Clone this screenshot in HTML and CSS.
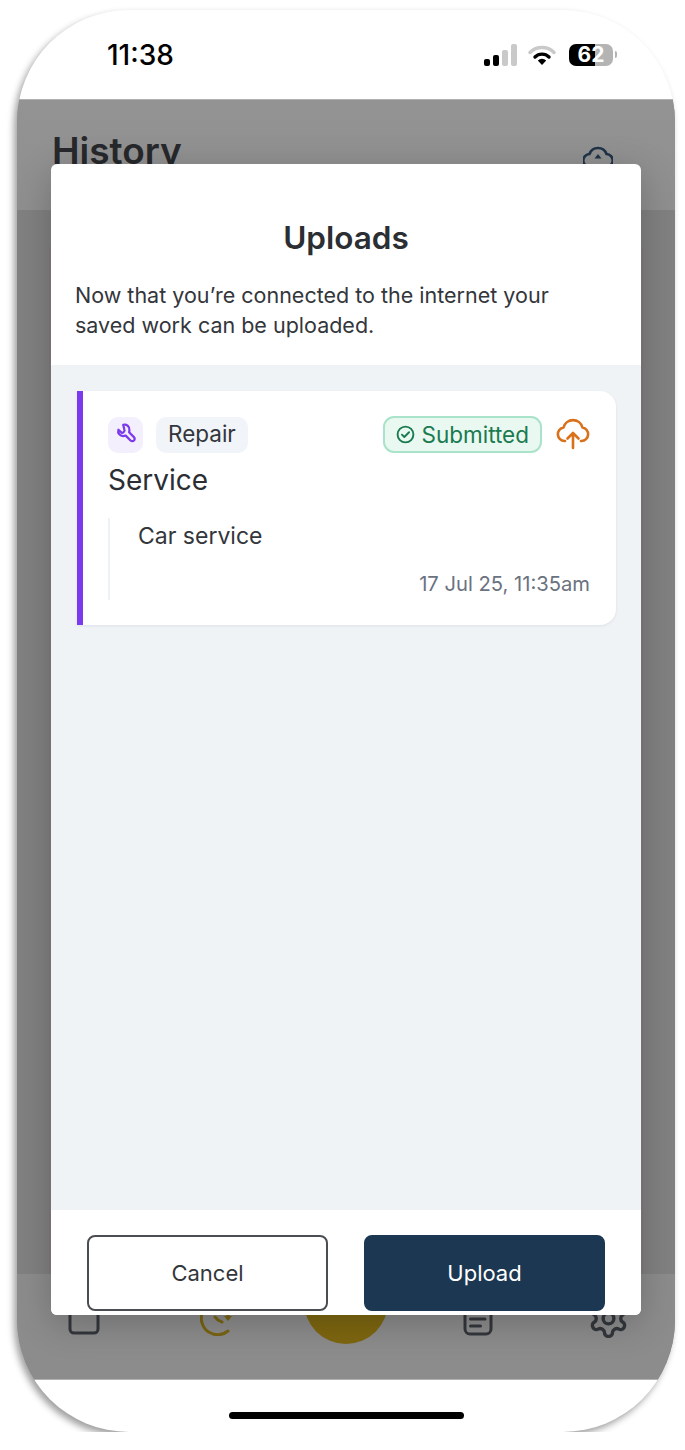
FILE: index.html
```html
<!DOCTYPE html>
<html lang="en">
<head>
    <meta charset="UTF-8">
    <meta name="viewport" content="width=device-width, initial-scale=1.0">
    <title>Uploads</title>
    <link rel="stylesheet" href="styles.css">
</head>
<body>

    <div class="phone">

        <!-- Status bar -->
        <div class="status-bar">
            <span class="clock">11:38</span>
            <div class="status-icons">
                <div class="signal">
                    <span class="bar bar-1"></span>
                    <span class="bar bar-2"></span>
                    <span class="bar bar-3 off"></span>
                    <span class="bar bar-4 off"></span>
                </div>
                <svg class="wifi" viewBox="0 0 28 22">
                    <path d="M2 8.5a17 17 0 0 1 24 0" fill="none" stroke="#c9c9c9" stroke-width="3.4" stroke-linecap="round"/>
                    <path d="M7 13a10 10 0 0 1 14 0" fill="none" stroke="#000" stroke-width="3.4" stroke-linecap="round"/>
                    <path d="M14 21l-4.200-4.600a6 6 0 0 1 8.400 0z" fill="#000"/>
                </svg>
                <div class="battery"><span>62</span></div>
                <span class="battery-nub"></span>
            </div>
        </div>

        <!-- Screen behind the dialog -->
        <div class="screen">
            <div class="screen-head">
                <h2 class="screen-title">History</h2>
                <svg class="head-cloud" viewBox="0 0 30 40" fill="none" stroke="#1f3347" stroke-width="2.600" stroke-linejoin="round">
                    <path d="M7 29a6.500 6.500 0 0 1-.5-13 9 9 0 0 1 17 0 6.500 6.500 0 0 1-.5 13z"/>
                    <path d="M15 16l-3.500 4.500h7z" fill="#1f3347" stroke="none"/>
                </svg>
            </div>
            <div class="screen-list"></div>
            <div class="bottom-nav">
                <svg class="nav-icon nav-home" viewBox="0 0 32 44" fill="none" stroke="#33373c" stroke-width="3">
                    <rect x="2" y="2" width="28" height="40" rx="4"/>
                </svg>
                <svg class="nav-icon nav-history" viewBox="0 0 36 36" fill="none" stroke="#7a6512" stroke-width="3" stroke-linecap="round">
                    <path d="M28 31A16.400 16.400 0 1 1 20 2"/>
                    <path d="M15 17l3 3 4 2"/>
                    <path d="M28 10v8"/>
                    <path d="M24 16h8l-4 5z" fill="#7a6512" stroke="none"/>
                </svg>
                <span class="nav-fab"></span>
                <svg class="nav-icon nav-doc" viewBox="0 0 30 48" fill="none" stroke="#33373c" stroke-width="3" stroke-linecap="round">
                    <rect x="2" y="2" width="26" height="44" rx="5"/>
                    <path d="M7.500 31h14.500M7.500 38h10"/>
                </svg>
                <svg class="nav-icon nav-gear" viewBox="0 0 24 24" fill="none" stroke="#33373c" stroke-width="1.900" stroke-linecap="round" stroke-linejoin="round">
                    <path d="M12.220 2h-.44a2 2 0 0 0-2 2v.18a2 2 0 0 1-1 1.730l-.43.25a2 2 0 0 1-2 0l-.15-.08a2 2 0 0 0-2.730.73l-.22.38a2 2 0 0 0 .73 2.730l.15.1a2 2 0 0 1 1 1.720v.51a2 2 0 0 1-1 1.740l-.15.09a2 2 0 0 0-.73 2.730l.22.38a2 2 0 0 0 2.730.73l.15-.08a2 2 0 0 1 2 0l.43.25a2 2 0 0 1 1 1.730V20a2 2 0 0 0 2 2h.44a2 2 0 0 0 2-2v-.18a2 2 0 0 1 1-1.730l.43-.25a2 2 0 0 1 2 0l.15.08a2 2 0 0 0 2.730-.73l.22-.39a2 2 0 0 0-.73-2.730l-.15-.08a2 2 0 0 1-1-1.740v-.5a2 2 0 0 1 1-1.740l.15-.09a2 2 0 0 0 .73-2.730l-.22-.38a2 2 0 0 0-2.730-.73l-.15.08a2 2 0 0 1-2 0l-.43-.25a2 2 0 0 1-1-1.730V4a2 2 0 0 0-2-2z"/>
                    <circle cx="12" cy="12" r="3"/>
                </svg>
            </div>
        </div>

        <!-- Home indicator -->
        <div class="home-area">
            <span class="home-bar"></span>
        </div>

        <!-- Uploads dialog -->
        <div class="dialog">
            <div class="dialog-head">
                <h1>Uploads</h1>
                <p>Now that you’re connected to the internet your saved work can be uploaded.</p>
            </div>

            <div class="dialog-body">
                <div class="upload-card">
                    <div class="card-top">
                        <span class="type-icon">
                            <svg viewBox="0 0 24 24" fill="none" stroke="#7c3aed" stroke-width="2" stroke-linecap="round" stroke-linejoin="round">
                                <path d="M10 3.500c3-.8 6 1.500 5.500 5l-.3 1.500 4.300 4.300c2 2-1 5-3 3l-4.300-4.300-1.500.3c-3.500.5-6-2.500-5-5.500l2.800 2.500c1 .8 3.300-1.500 2.500-2.500z"/>
                            </svg>
                        </span>
                        <span class="type-chip">Repair</span>
                        <span class="status-badge">
                            <svg viewBox="0 0 24 24" fill="none" stroke="#1a7a50" stroke-width="2.400" stroke-linecap="round" stroke-linejoin="round">
                                <circle cx="12" cy="12" r="10"/>
                                <path d="M7.500 12.200l3 3 6-6"/>
                            </svg>
                            Submitted
                        </span>
                        <svg class="upload-icon" viewBox="0 0 34 34" fill="none" stroke="#d9701a" stroke-width="2.600" stroke-linecap="round" stroke-linejoin="round">
                            <path d="M9 25H8.500A6.800 6.800 0 0 1 7.500 11.500 9.800 9.800 0 0 1 26.500 11.500 6.800 6.800 0 0 1 25.500 25H25"/>
                            <path d="M17 32V17M11.500 22.500 17 17l5.500 5.500"/>
                        </svg>
                    </div>
                    <h3 class="card-title">Service</h3>
                    <div class="card-note">
                        <p>Car service</p>
                        <time>17 Jul 25, 11:35am</time>
                    </div>
                </div>
            </div>

            <div class="dialog-foot">
                <button class="btn btn-cancel">Cancel</button>
                <button class="btn btn-upload">Upload</button>
            </div>
        </div>

    </div>

</body>
</html>
```

FILE: styles.css
```css
/* Page */
body {
    margin: 0;
    background-color: #fff;
    font-family: 'Inter', 'Liberation Sans', sans-serif;
    color: #2b2e33;
}

/* Phone frame */
.phone {
    position: relative;
    display: flex;
    flex-direction: column;
    width: 658px;
    height: 1422px;
    margin: 10px 0 0 17px;
    background: #fff;
    border-radius: 112px;
    overflow: hidden;
    box-shadow: -3px 4px 7px rgba(0, 0, 0, 0.38);
}

/* Status bar */
.status-bar {
    display: flex;
    justify-content: space-between;
    align-items: center;
    height: 89px;
    padding: 0 58px 0 90px;
    box-sizing: border-box;
    flex-shrink: 0;
}

.clock {
    font-size: 28px;
    font-weight: 500;
    color: #000;
}

.status-icons {
    display: flex;
    align-items: center;
}

.signal {
    display: flex;
    align-items: flex-end;
    gap: 3px;
    height: 22px;
    margin-right: 11px;
}

.bar {
    width: 6px;
    background: #000;
    border-radius: 2px;
}

.bar-1 { height: 7px; }
.bar-2 { height: 11px; }
.bar-3 { height: 16px; }
.bar-4 { height: 22px; }

.bar.off {
    background: #c9c9c9;
}

.wifi {
    width: 28px;
    height: 22px;
    margin-right: 13px;
}

.battery {
    width: 44px;
    height: 22px;
    border-radius: 7px;
    background: linear-gradient(90deg, #000 58%, #b4b4b4 58%);
    color: #fff;
    font-size: 21px;
    font-weight: 700;
    line-height: 22px;
    text-align: center;
}

.battery-nub {
    width: 2px;
    height: 7px;
    margin-left: 2px;
    background: #b4b4b4;
    border-radius: 0 2px 2px 0;
}

/* Dimmed screen behind the dialog */
.screen {
    display: flex;
    flex-direction: column;
    flex: 1;
    background: #818181;
    border-top: 1px solid #b0b0b0;
    border-bottom: 1px solid #b0b0b0;
}

.screen-head {
    display: flex;
    justify-content: space-between;
    height: 110px;
    padding: 28px 62px 0 35px;
    box-sizing: border-box;
    background: linear-gradient(180deg, #939393, #8f8f8f);
}

.screen-title {
    margin: 0;
    font-size: 37px;
    font-weight: 600;
    color: #26282b;
}

.head-cloud {
    width: 30px;
    height: 40px;
    margin-top: 10px;
}

.screen-list {
    flex: 1;
    margin: 36px 32px 0;
    border-left: 1px solid #85787f;
    border-right: 1px solid #85787f;
}

.bottom-nav {
    display: flex;
    align-items: flex-end;
    height: 105px;
    padding: 0 0 42px 51px;
    box-sizing: border-box;
    background: #8c8c8c;
}

.nav-icon {
    flex-shrink: 0;
}

.nav-home {
    width: 32px;
    height: 44px;
    margin-bottom: 2px;
}

.nav-history {
    width: 36px;
    height: 36px;
    margin-left: 100px;
    margin-bottom: 1px;
}

.nav-fab {
    width: 84px;
    height: 84px;
    margin-left: 68px;
    margin-bottom: -7px;
    border-radius: 50%;
    background: #7e6710;
}

.nav-doc {
    width: 30px;
    height: 48px;
    margin-left: 75px;
    margin-bottom: 1px;
}

.nav-gear {
    width: 43px;
    height: 43px;
    margin-left: 94px;
    margin-bottom: -3px;
}

/* Home indicator */
.home-area {
    display: flex;
    justify-content: center;
    height: 52px;
    flex-shrink: 0;
}

.home-bar {
    width: 235px;
    height: 7px;
    margin-top: 32px;
    background: #000;
    border-radius: 4px;
}

/* Uploads dialog */
.dialog {
    position: absolute;
    top: 154px;
    left: 34px;
    display: flex;
    flex-direction: column;
    width: 590px;
    height: 1151px;
    background: #fff;
    border-radius: 6px;
    overflow: hidden;
    box-shadow: 0 8px 36px rgba(0, 0, 0, 0.22);
}

.dialog-head {
    height: 201px;
    padding: 54px 24px 0;
    box-sizing: border-box;
    flex-shrink: 0;
}

.dialog-head h1 {
    margin: 0 0 22px;
    font-size: 31.5px;
    font-weight: 600;
    line-height: 40px;
    text-align: center;
}

.dialog-head p {
    max-width: 500px;
    margin: 0;
    font-size: 21.5px;
    line-height: 30px;
    color: #33363b;
}

.dialog-body {
    flex: 1;
    padding: 26px 25px 26px 26px;
    background: #eff3f6;
}

/* Card */
.upload-card {
    height: 234px;
    padding: 25px 26px 0 25px;
    box-sizing: border-box;
    background: #fff;
    border-left: 6px solid #7c3aed;
    border-radius: 0 16px 16px 0;
    box-shadow: 0 1px 3px rgba(20, 30, 50, 0.08);
}

.card-top {
    display: flex;
    align-items: center;
}

.type-icon {
    display: flex;
    justify-content: center;
    align-items: center;
    width: 35px;
    height: 36px;
    background: #f4effd;
    border-radius: 10px;
}

.type-icon svg {
    width: 27px;
    height: 27px;
}

.type-chip {
    margin-left: 13px;
    padding: 0 12px;
    height: 36px;
    font-size: 22.5px;
    line-height: 34px;
    background: #f1f4f8;
    border-radius: 10px;
    color: #33363b;
}

.status-badge {
    display: flex;
    align-items: center;
    gap: 6px;
    height: 37px;
    margin-left: auto;
    padding: 0 11px;
    box-sizing: border-box;
    font-size: 22.5px;
    color: #1a7a50;
    background: #e9f8f0;
    border: 2px solid #a9e3c9;
    border-radius: 11px;
}

.status-badge svg {
    width: 19px;
    height: 19px;
}

.upload-icon {
    width: 34px;
    height: 34px;
    margin-left: 14px;
    margin-top: -4px;
}

.card-title {
    margin: 9px 0 20px;
    font-size: 28px;
    font-weight: 400;
    line-height: 36px;
}

.card-note {
    display: flex;
    flex-direction: column;
    height: 82px;
    padding-left: 28px;
    border-left: 2px solid #eef1f5;
}

.card-note p {
    margin: 0;
    font-size: 23px;
    line-height: 36px;
    color: #33363b;
}

.card-note time {
    margin-top: 15px;
    text-align: right;
    font-size: 20.2px;
    line-height: 30px;
    color: #6b7280;
}

/* Footer buttons */
.dialog-foot {
    display: flex;
    gap: 36px;
    height: 105px;
    padding: 25px 36px 4px;
    box-sizing: border-box;
    background: #fff;
    flex-shrink: 0;
}

.btn {
    flex: 1 1 0;
    padding: 0;
    font-family: 'Inter', 'Liberation Sans', sans-serif;
    font-size: 22px;
    border-radius: 8px;
}

.btn-cancel {
    background: #fff;
    color: #33363b;
    border: 2px solid #4a4d52;
}

.btn-upload {
    background: #1c3752;
    color: #fff;
    border: 2px solid #1c3752;
}
```
